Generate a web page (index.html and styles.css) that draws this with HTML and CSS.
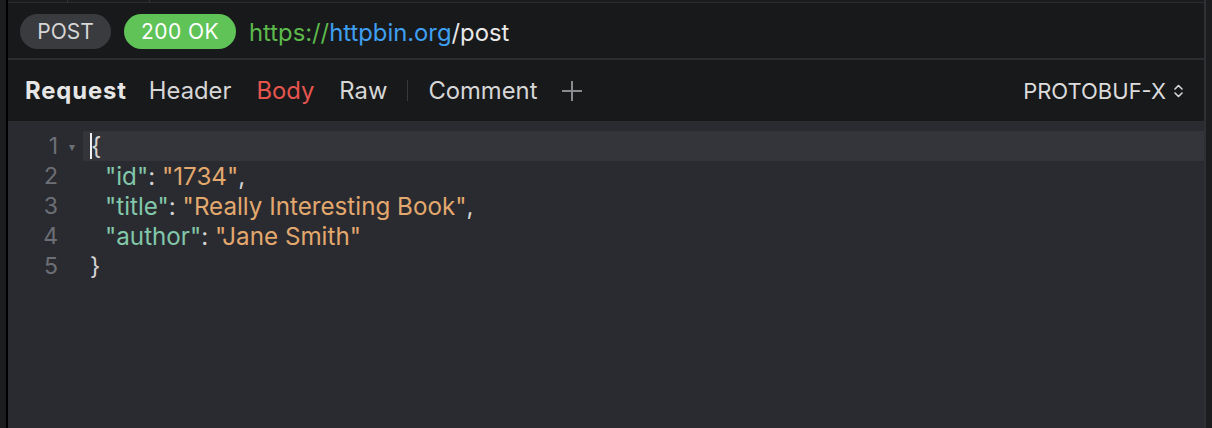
FILE: index.html
```html
<!DOCTYPE html>
<html lang="en">
<head>
    <meta charset="UTF-8">
    <meta name="viewport" content="width=device-width, initial-scale=1.0">
    <title>Request</title>
    <link rel="stylesheet" href="styles.css">
</head>
<body>

    <div class="frame">
        <div class="edge"></div>

        <div class="panel">
            <div class="top-strip">
                <span class="tick"></span>
                <span class="tick"></span>
            </div>

            <div class="url-bar">
                <span class="pill method">POST</span>
                <span class="pill status">200 OK</span>
                <span class="url"><span class="scheme">https://</span><span class="host">httpbin.org</span><span class="path">/post</span></span>
            </div>

            <div class="tabs">
                <span class="tab title">Request</span>
                <span class="tab header">Header</span>
                <span class="tab active">Body</span>
                <span class="tab raw">Raw</span>
                <span class="divider"></span>
                <span class="tab">Comment</span>
                <span class="tab add">
                    <svg width="20" height="20" viewBox="0 0 20 20"><path d="M10 0v20M0 10h20" stroke="#8a8b8f" stroke-width="2" fill="none"/></svg>
                </span>
                <span class="format">PROTOBUF-X
                    <svg width="11" height="16" viewBox="0 0 11 16"><path d="M2 6l3.5-3.5L9 6M2 10l3.5 3.5L9 10" stroke="#d8d8d8" stroke-width="1.6" fill="none" stroke-linecap="round" stroke-linejoin="round"/></svg>
                </span>
            </div>

            <div class="editor">
                <div class="line current">
                    <span class="num">1</span><span class="fold">&#9662;</span>
                    <span class="code"><span class="cursor"></span>{</span>
                </div>
                <div class="line">
                    <span class="num">2</span><span class="fold"></span>
                    <span class="code indent"><span class="key">"id"</span>: <span class="str">"1734"</span>,</span>
                </div>
                <div class="line">
                    <span class="num">3</span><span class="fold"></span>
                    <span class="code indent"><span class="key">"title"</span>: <span class="str">"Really Interesting Book"</span>,</span>
                </div>
                <div class="line">
                    <span class="num">4</span><span class="fold"></span>
                    <span class="code indent"><span class="key">"author"</span>: <span class="str">"Jane Smith"</span></span>
                </div>
                <div class="line">
                    <span class="num">5</span><span class="fold"></span>
                    <span class="code">}</span>
                </div>
            </div>
        </div>

        <div class="side"></div>
    </div>

</body>
</html>
```

FILE: styles.css
```css
html, body {
    margin: 0;
    height: 100%;
}
body {
    font-family: Inter, "Noto Sans", sans-serif;
    background-color: #1c1d1f;
    color: #d8d8d8;
    overflow: hidden;
}
.frame {
    display: flex;
    height: 428px;
}
.edge {
    width: 6px;
    background-color: #1c1d1f;
    border-right: 2px solid #000;
}
.side {
    width: 6px;
    background-color: #1c1d1f;
    border-left: 2px solid #2f3033;
}
.panel {
    flex: 1;
    display: flex;
    flex-direction: column;
    background-color: #18191b;
}
.top-strip {
    height: 2px;
    border-bottom: 1px solid #2c2d30;
    background-color: #1a1b1d;
    display: flex;
}
.tick {
    width: 1px;
    background-color: #34353a;
    margin-left: 59px;
}
.tick + .tick {
    margin-left: 81px;
}
.url-bar {
    height: 57px;
    display: flex;
    align-items: center;
    padding-left: 12px;
    padding-top: 2px;
    box-sizing: border-box;
    border-bottom: 2px solid #2c2d30;
}
.pill {
    height: 35px;
    border-radius: 18px;
    display: flex;
    align-items: center;
    justify-content: center;
    font-size: 21px;
    margin-right: 13px;
}
.method {
    width: 91px;
    background-color: #3a3b3f;
    color: #d6d6d6;
}
.status {
    width: 112px;
    background-color: #5fc357;
    color: #fff;
    letter-spacing: 0.4px;
}
.url {
    font-size: 23.8px;
    color: #e8e8e8;
    margin-top: 2px;
}
.scheme {
    color: #5db94b;
}
.host {
    color: #3f9ff0;
}
.tabs {
    height: 61px;
    display: flex;
    align-items: center;
    padding-left: 17px;
    padding-right: 20px;
    border-bottom: 1px solid #2c2d30;
    font-size: 23.8px;
}
.tab {
    color: #d6d6d6;
    margin-right: 25px;
}
.tab.title {
    font-weight: 700;
    color: #e6e6e6;
    letter-spacing: 0.9px;
    margin-right: 22px;
}
.tab.active {
    color: #e5554e;
}
.tab.raw {
    margin-right: 23px;
}
.divider {
    width: 1px;
    height: 21px;
    background-color: #38393d;
    margin-left: -3px;
    margin-right: 20px;
}
.add {
    display: flex;
}
.format {
    margin-left: auto;
    display: flex;
    align-items: center;
    gap: 7px;
    font-size: 22px;
    color: #dcdcdc;
}
.editor {
    flex: 1;
    background-color: #2a2b30;
    padding-top: 9px;
    font-size: 24.2px;
}
.line {
    height: 30px;
    display: flex;
    align-items: center;
}
.num {
    width: 50px;
    text-align: right;
    color: #6d6f76;
    font-size: 23px;
}
.fold {
    width: 25px;
    padding-left: 11px;
    box-sizing: border-box;
    font-size: 12px;
    color: #6d6f76;
}
.code {
    flex: 1;
    height: 30px;
    display: flex;
    align-items: center;
    padding-left: 7px;
    color: #d4d4d4;
    white-space: pre;
}
.current .code {
    background-color: #34353a;
}
.indent {
    padding-left: 22px;
}
.cursor {
    width: 2px;
    height: 26px;
    background-color: #f0f0f0;
    margin-right: -1px;
}
.key {
    color: #82c7aa;
}
.str {
    color: #e3a86d;
}
```
